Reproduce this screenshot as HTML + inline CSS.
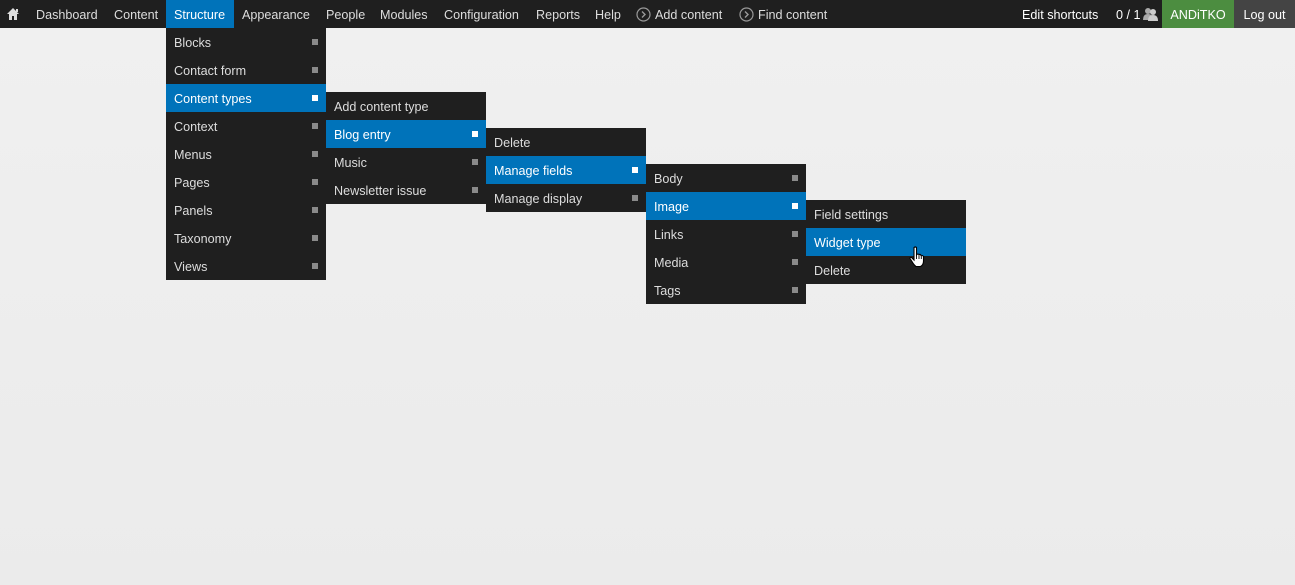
<!DOCTYPE html>
<html><head><meta charset="utf-8"><style>
*{margin:0;padding:0;box-sizing:border-box}
body{width:1295px;height:585px;overflow:hidden;background:linear-gradient(#f0f0f0,#ebebeb);font-family:"Liberation Sans",sans-serif;font-size:12.6px;color:#ddd;position:relative}
#bar{position:absolute;left:0;top:0;width:1295px;height:28px;background:#1f1f1f}
.t{position:absolute;top:0;height:28px;line-height:30px;white-space:nowrap;color:#ddd}
.hl{background:#0073ba;color:#fff}
.m{position:absolute;width:160px;background:#1f1f1f}
.m div{height:28px;line-height:30px;padding-left:8px;position:relative;color:#ddd;white-space:nowrap}
.m div.a{background:#0073ba;color:#fff}
.m div.s:after{content:"";position:absolute;right:8px;top:11px;width:6px;height:6px;background:#8a8a8a}
.m div.a.s:after{background:#fff}
</style></head><body>
<div id="bar">
<svg style="position:absolute;left:6px;top:7px" width="14" height="14" viewBox="0 0 14 14"><path d="M7 1 L1 7 H3 V13 H6 V9 H8 V13 H11 V7 H13 Z" fill="#ddd"/><rect x="10" y="2" width="2" height="3" fill="#ddd"/></svg>
<span class="t" style="left:36px">Dashboard</span>
<span class="t" style="left:114px">Content</span>
<span class="t hl" style="left:166px;width:68px;padding-left:8px">Structure</span>
<span class="t" style="left:242px">Appearance</span>
<span class="t" style="left:326px">People</span>
<span class="t" style="left:380px">Modules</span>
<span class="t" style="left:444px">Configuration</span>
<span class="t" style="left:536px">Reports</span>
<span class="t" style="left:595px">Help</span>
<svg style="position:absolute;left:636px;top:7px" width="15" height="15" viewBox="0 0 15 15"><circle cx="7.5" cy="7.5" r="6.5" fill="none" stroke="#999" stroke-width="1.2"/><path d="M6 4.5 L9 7.5 L6 10.5" fill="none" stroke="#999" stroke-width="1.4"/></svg>
<span class="t" style="left:655px">Add content</span>
<svg style="position:absolute;left:739px;top:7px" width="15" height="15" viewBox="0 0 15 15"><circle cx="7.5" cy="7.5" r="6.5" fill="none" stroke="#999" stroke-width="1.2"/><path d="M6 4.5 L9 7.5 L6 10.5" fill="none" stroke="#999" stroke-width="1.4"/></svg>
<span class="t" style="left:758px">Find content</span>
<span class="t" style="left:1022px;color:#fff">Edit shortcuts</span>
<span class="t" style="left:1116px;color:#fff">0 / 1</span>
<svg style="position:absolute;left:1143px;top:7px" width="16" height="14" viewBox="0 0 16 14"><circle cx="5" cy="4" r="3" fill="#aaa"/><path d="M0 13 Q0 7 5 7 Q10 7 10 13Z" fill="#aaa"/><circle cx="10" cy="5" r="3" fill="#ccc"/><path d="M5 14 Q5 8 10 8 Q15 8 15 14Z" fill="#ccc"/></svg>
<span class="t" style="left:1162px;width:72px;background:#4c8d40;color:#fff;text-align:center">ANDiTKO</span>
<span class="t" style="left:1234px;width:61px;background:#444;color:#fff;text-align:center">Log out</span>
</div>
<div class="m" style="left:166px;top:28px">
<div class="s">Blocks</div><div class="s">Contact form</div><div class="s a">Content types</div><div class="s">Context</div><div class="s">Menus</div><div class="s">Pages</div><div class="s">Panels</div><div class="s">Taxonomy</div><div class="s">Views</div></div>
<div class="m" style="left:326px;top:92px">
<div>Add content type</div><div class="s a">Blog entry</div><div class="s">Music</div><div class="s">Newsletter issue</div></div>
<div class="m" style="left:486px;top:128px">
<div>Delete</div><div class="s a">Manage fields</div><div class="s">Manage display</div></div>
<div class="m" style="left:646px;top:164px">
<div class="s">Body</div><div class="s a">Image</div><div class="s">Links</div><div class="s">Media</div><div class="s">Tags</div></div>
<div class="m" style="left:806px;top:200px">
<div>Field settings</div><div class="a">Widget type</div><div>Delete</div></div>
<svg style="position:absolute;left:909px;top:246px" width="18" height="22" viewBox="0 0 18 22"><path d="M5 1.5 Q6.5 0.5 7.5 1.5 V9 Q8.5 7.5 10 8.5 Q11.5 8 12 9.5 Q13.5 9 14.5 10.5 V15 Q14.5 19 11.5 20.5 H7 Q5 19 3 15.5 L1 12.5 Q1 11 2.5 11.5 L5 14 Z" fill="#fff" stroke="#000" stroke-width="1.1"/><path d="M7.5 9 V13 M10 9 V13 M12.3 10 V13" stroke="#000" stroke-width="0.9"/></svg>
</body></html>
